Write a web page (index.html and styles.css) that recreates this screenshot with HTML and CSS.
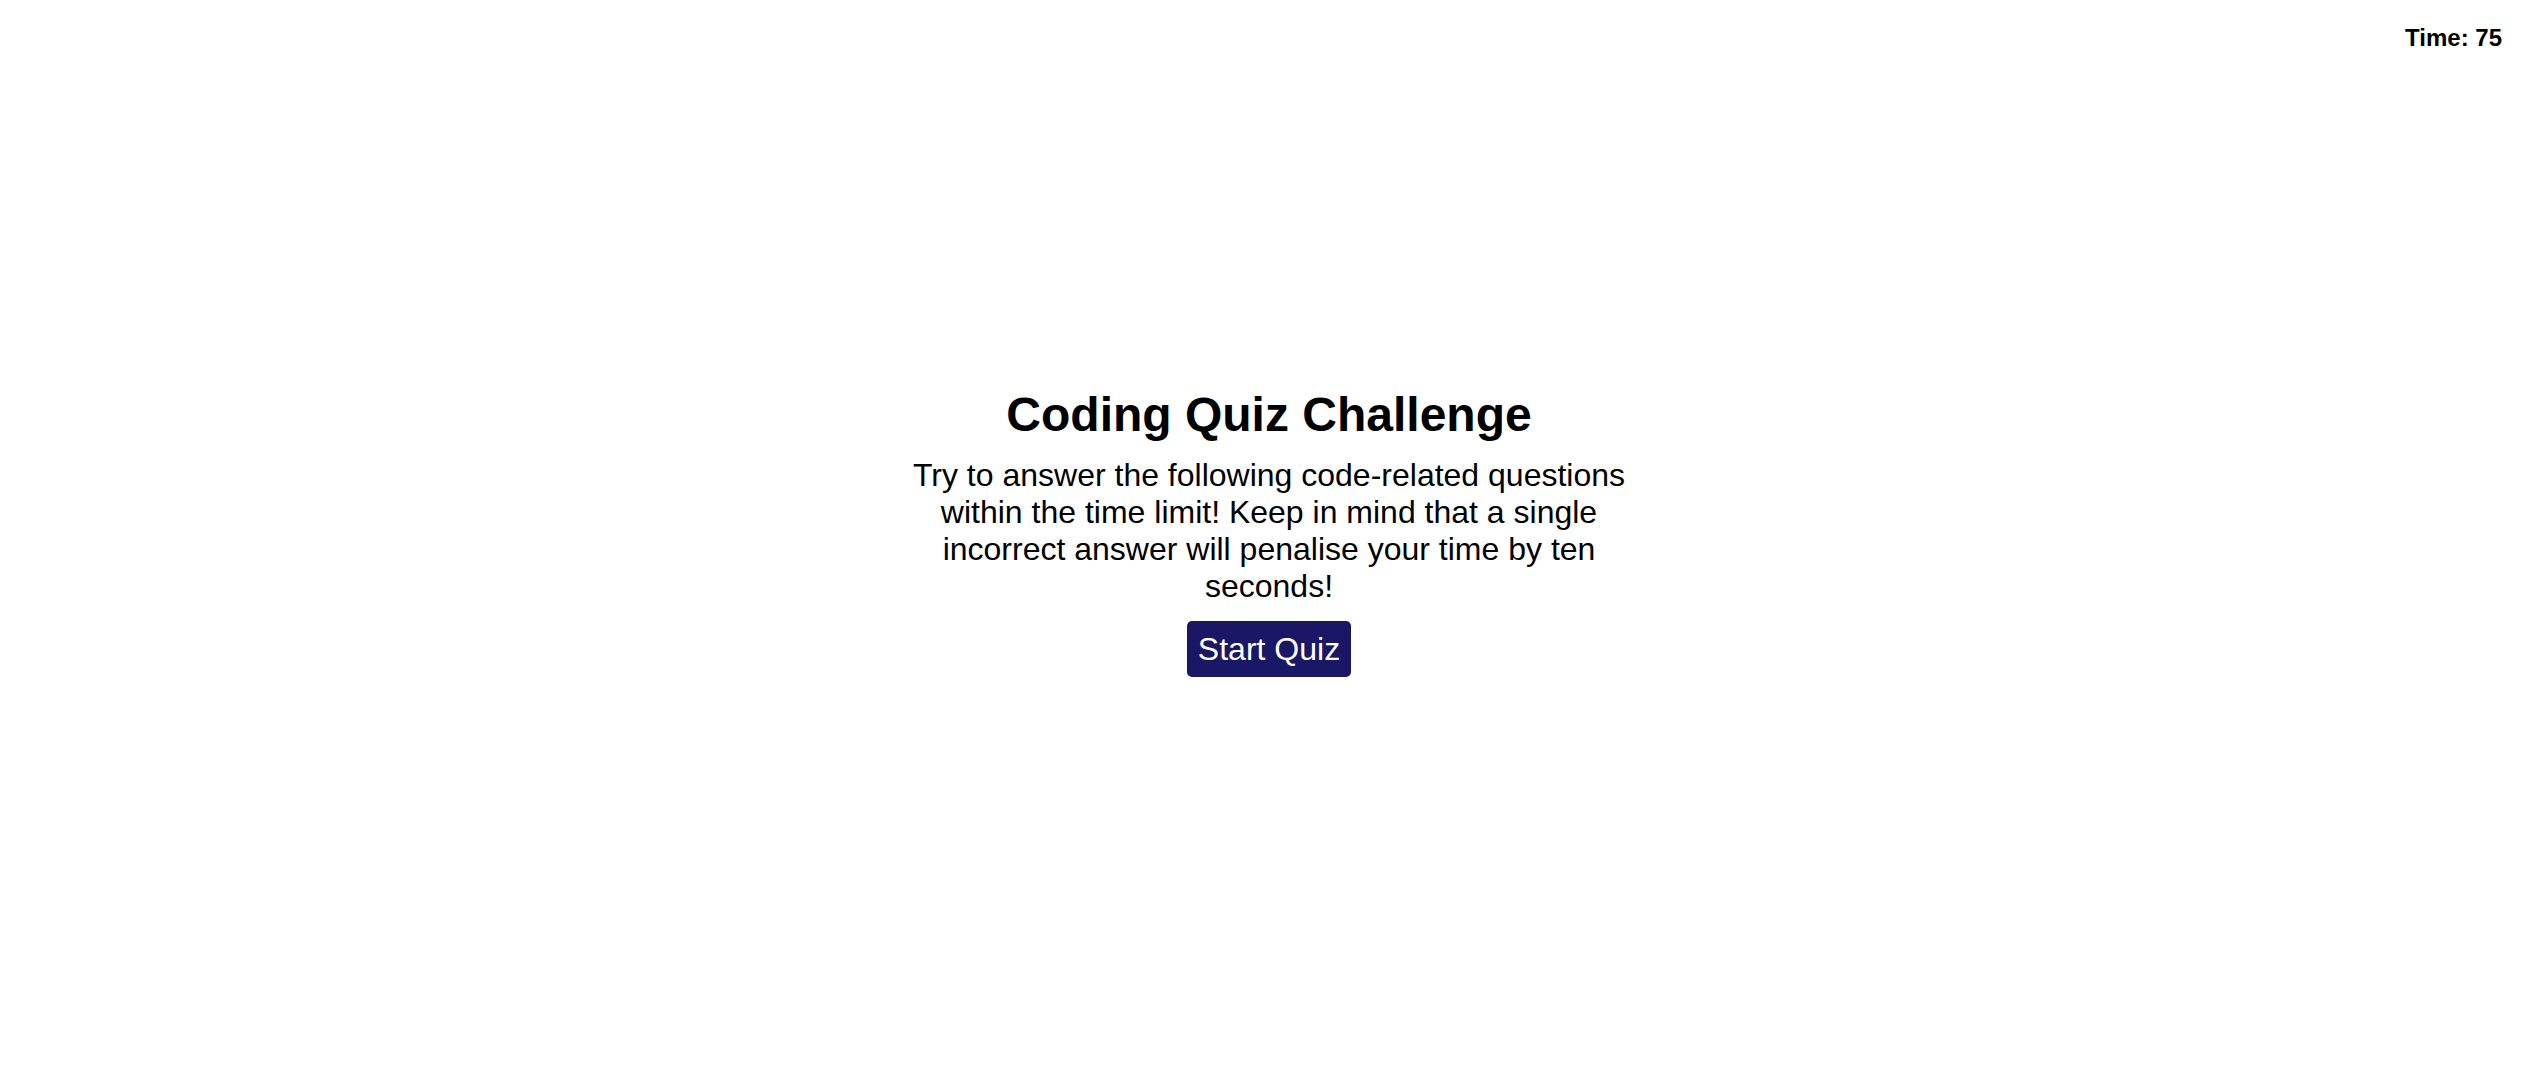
FILE: index.html
```html
<!DOCTYPE html>
<html lang="en">
<head>
<meta charset="utf-8">
<title>Coding Quiz Challenge</title>
<link rel="stylesheet" href="styles.css">
</head>
<body>
<header class="topbar">
  <div class="timer">Time: <span class="timer-value">75</span></div>
</header>
<main class="intro">
  <h1 class="intro-title">Coding Quiz Challenge</h1>
  <p class="intro-text">Try to answer the following code-related questions within the time limit! Keep in mind that a single incorrect answer will penalise your time by ten seconds!</p>
  <button class="start-btn" type="button">Start Quiz</button>
</main>
</body>
</html>
```

FILE: styles.css
```css
html, body {
  margin: 0;
  padding: 0;
  background: #ffffff;
  color: #000000;
  font-family: "Liberation Sans", Arial, sans-serif;
}

.topbar {
  display: flex;
  justify-content: flex-end;
  padding: 24px 23px 0 24px;
}

.timer {
  font-size: 24px;
  font-weight: bold;
  line-height: normal;
}

.intro {
  display: flex;
  flex-direction: column;
  align-items: center;
  padding-top: 335px;
  padding-left: 13px;
}

.intro-title {
  margin: 0 0 15px 0;
  font-size: 48px;
  font-weight: bold;
  line-height: normal;
  text-align: center;
}

.intro-text {
  margin: 0 0 16px 0;
  width: 740px;
  font-size: 32px;
  line-height: normal;
  text-align: center;
}

.start-btn {
  font-family: "Liberation Sans", Arial, sans-serif;
  font-size: 32px;
  line-height: normal;
  color: #ffffff;
  background: #191766;
  border: none;
  border-radius: 5px;
  padding: 9.5px 10.5px;
  cursor: pointer;
}
```
